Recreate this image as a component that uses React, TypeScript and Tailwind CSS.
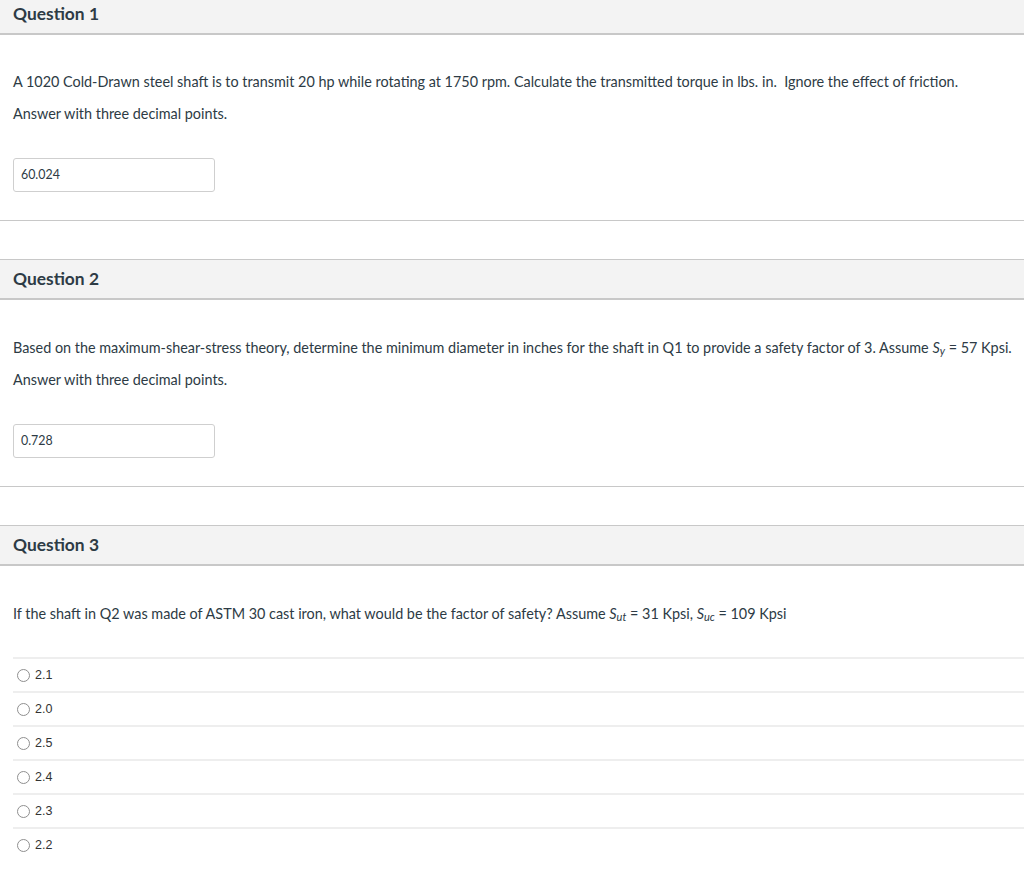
import React from "react";

function Header({ n, first }: { n: number; first?: boolean }) {
  return (
    <div
      className={
        "h-[41px] bg-[#f3f3f3] border-t border-b-2 border-[#c8c8c8] flex items-center px-[13px] text-[17.4px] font-bold text-[#2d3b45] " +
        (first ? "-mt-[6px]" : "")
      }
    >
      Question {n}
    </div>
  );
}

function Sub({ base, sub }: { base: string; sub: string }) {
  return (
    <span>
      <i>{base}</i>
      <sub className="text-[11px] italic leading-none relative top-[2px]">{sub}</sub>
    </span>
  );
}

function InputBox({ value }: { value: string }) {
  return (
    <div className="mt-[34px] w-[202px] h-[34px] border border-[#cfcfcf] rounded-[3px] flex items-center px-[7px] text-[12.4px] text-[#2d3b45] font-['Lato']">
      {value}
    </div>
  );
}

export default function App() {
  const opts = ["2.1", "2.0", "2.5", "2.4", "2.3", "2.2"];
  return (
    <div className="w-[1024px] h-[874px] overflow-hidden bg-white font-['Lato',sans-serif] text-[#2d3b45] text-[14.4px]">
      {/* Question 1 */}
      <div className="border-b border-[#c8c8c8] mb-[38px]">
        <Header n={1} first />
        <div className="px-[13px] pt-[37px] pb-[28px]">
          <p className="leading-[20px]">
            A 1020 Cold-Drawn steel shaft is to transmit 20 hp while rotating at 1750 rpm. Calculate the transmitted torque in lbs. in.&nbsp; Ignore the effect of friction.
          </p>
          <p className="leading-[20px] mt-[12px]">Answer with three decimal points.</p>
          <InputBox value="60.024" />
        </div>
      </div>

      {/* Question 2 */}
      <div className="border-b border-[#c8c8c8] mb-[38px]">
        <Header n={2} />
        <div className="px-[13px] pt-[38px] pb-[28px]">
          <p className="leading-[20px] whitespace-nowrap">
            Based on the maximum-shear-stress theory, determine the minimum diameter in inches for the shaft in Q1 to provide a safety factor of 3. Assume <Sub base="S" sub="y" /> = 57 Kpsi.
          </p>
          <p className="leading-[20px] mt-[12px]">Answer with three decimal points.</p>
          <InputBox value="0.728" />
        </div>
      </div>

      {/* Question 3 */}
      <div>
        <Header n={3} />
        <div className="pl-[13px] pt-[38px]">
          <p className="leading-[20px]">
            If the shaft in Q2 was made of ASTM 30 cast iron, what would be the factor of safety? Assume <Sub base="S" sub="ut" /> = 31 Kpsi, <Sub base="S" sub="uc" /> = 109 Kpsi
          </p>
          <div className="mt-[33px]">
            {opts.map((o) => (
              <div key={o} className="h-[34px] border-t-2 border-[#eeeeee] flex items-center pl-[4px] font-['Liberation_Sans',Arial,sans-serif] text-[12.5px] text-[#333333]">
                <span className="w-[13px] h-[13px] rounded-full border border-[#8f8f8f] bg-white mr-[5px] shrink-0"></span>
                <span>{o}</span>
              </div>
            ))}
          </div>
        </div>
      </div>
    </div>
  );
}
